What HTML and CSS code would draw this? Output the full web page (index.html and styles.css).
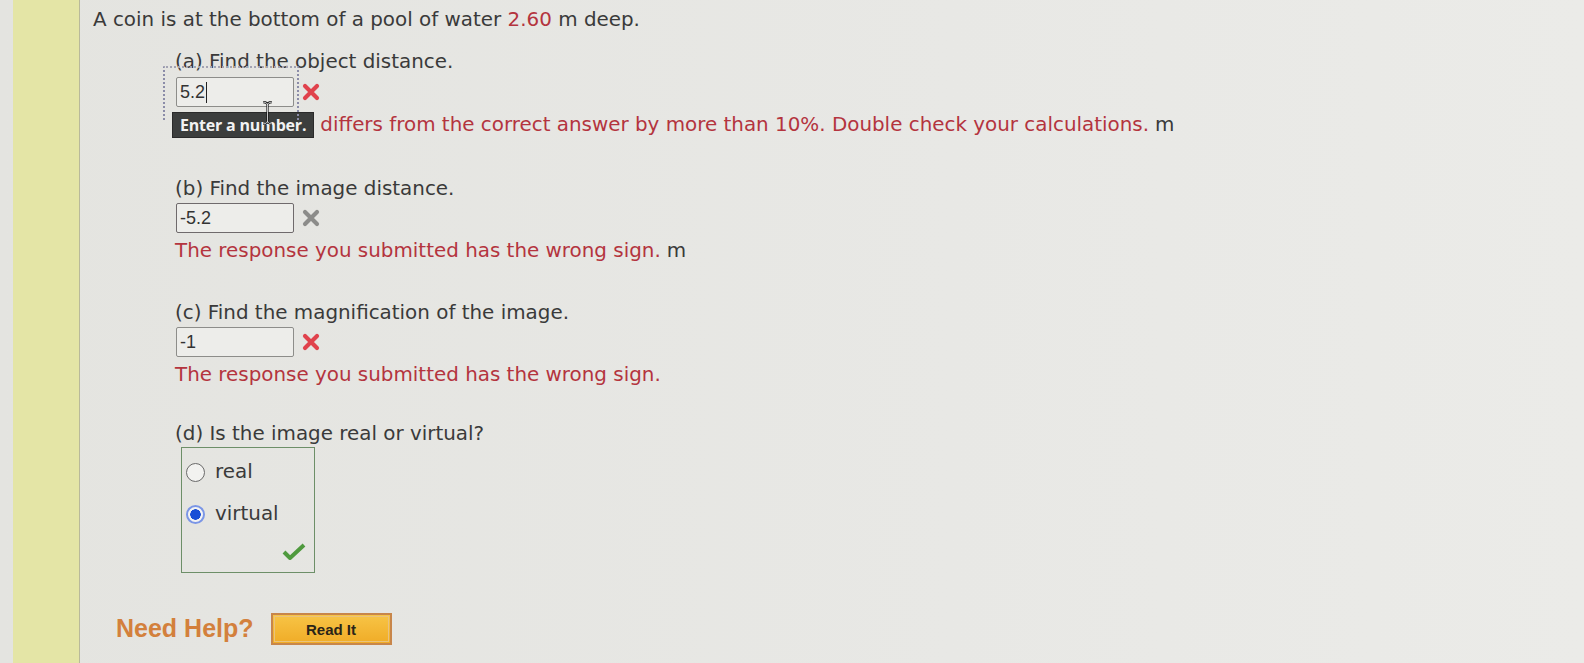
FILE: index.html
```html
<!DOCTYPE html>
<html lang="en">
<head>
<meta charset="utf-8">
<title>Question</title>
<link rel="stylesheet" href="styles.css">
</head>
<body>
<div class="page">
  <aside class="rail"></aside>
  <main class="content">
    <p class="question">A coin is at the bottom of a pool of water <span class="given">2.60</span> m deep.</p>

    <div class="parts">
      <section class="part part-a">
        <div class="label">(a) Find the object distance.</div>
        <div class="answer-row">
          <span class="field">5.2<span class="caret"></span></span>
          <svg class="mark" viewBox="0 0 20 20" width="20" height="20"><path d="M4 4 L16 16 M16 4 L4 16" class="x-red"/></svg>
        </div>
        <div class="feedback">
          <span class="tip">Enter a number.</span>
          <span class="msg">differs from the correct answer by more than 10%. Double check your calculations.</span>
          <span class="unit">m</span>
        </div>
        <div class="focus-ring"></div>
        <svg class="ibeam" viewBox="0 0 12 24" width="13" height="26"><path d="M2 2 Q6 2 6 5 Q6 2 10 2 M6 5 V19 M2 22 Q6 22 6 19 Q6 22 10 22" fill="none" stroke="#111" stroke-width="2"/><path d="M2 2 Q6 2 6 5 Q6 2 10 2 M6 5 V19 M2 22 Q6 22 6 19 Q6 22 10 22" fill="none" stroke="#fff" stroke-width="0.7"/></svg>
      </section>

      <section class="part">
        <div class="label">(b) Find the image distance.</div>
        <div class="answer-row">
          <span class="field field-dark">-5.2</span>
          <svg class="mark" viewBox="0 0 20 20" width="20" height="20"><path d="M4 4 L16 16 M16 4 L4 16" class="x-gray"/></svg>
        </div>
        <div class="feedback">
          <span class="msg">The response you submitted has the wrong sign.</span>
          <span class="unit">m</span>
        </div>
      </section>

      <section class="part">
        <div class="label">(c) Find the magnification of the image.</div>
        <div class="answer-row">
          <span class="field">-1</span>
          <svg class="mark" viewBox="0 0 20 20" width="20" height="20"><path d="M4 4 L16 16 M16 4 L4 16" class="x-red"/></svg>
        </div>
        <div class="feedback">
          <span class="msg">The response you submitted has the wrong sign.</span>
        </div>
      </section>

      <section class="part part-d">
        <div class="label">(d) Is the image real or virtual?</div>
        <div class="choices">
          <label class="choice"><span class="radio"></span><span>real</span></label>
          <label class="choice"><span class="radio radio-on"></span><span>virtual</span></label>
          <svg class="check" viewBox="0 0 24 18" width="24" height="18"><path d="M2 10 L8 16 L22 3" fill="none" stroke="#4f9a3e" stroke-width="4" stroke-linejoin="round"/></svg>
        </div>
      </section>
    </div>

    <div class="help">
      <span class="help-text">Need Help?</span>
      <button class="read-it">Read It</button>
    </div>
  </main>
</div>
</body>
</html>
```

FILE: styles.css
```css
html, body {
  margin: 0;
  padding: 0;
  height: 100%;
}
body {
  background: linear-gradient(90deg, #e4e4e0, #e8e8e5 60%, #ebebe8);
  color: #3a3a3a;
  font-family: "DejaVu Sans", Verdana, sans-serif;
  font-size: 19.9px;
  overflow: hidden;
}
.page {
  display: flex;
  height: 663px;
}
.rail {
  width: 66px;
  margin-left: 13px;
  background: #e4e5a6;
  border-right: 1px solid #b9b99a;
  flex: none;
}
.content {
  padding-left: 13px;
  padding-top: 9px;
  flex: 1;
}
.question {
  margin: 0;
  line-height: 22px;
}
.given {
  color: #b4343e;
}
.parts {
  margin-left: 82px;
  margin-top: 20px;
  display: flex;
  flex-direction: column;
  gap: 40px;
}
.part {
  position: relative;
}
.part-d {
  margin-top: -3px;
}
.label {
  line-height: 22px;
}
.answer-row {
  display: flex;
  align-items: center;
  margin-top: 3px;
  margin-left: 1px;
}
.part-a .answer-row {
  margin-top: 4px;
}
.field {
  box-sizing: border-box;
  width: 118px;
  height: 30px;
  border: 1px solid #8d8d8a;
  border-radius: 2px;
  background: #ededea;
  font-family: "Liberation Sans", Arial, sans-serif;
  font-size: 18px;
  color: #333;
  padding: 4px 0 0 3px;
  display: flex;
  align-items: flex-start;
}
.field-dark {
  border-color: #6f6a6c;
}
.caret {
  display: inline-block;
  width: 1px;
  height: 21px;
  background: #222;
  margin-left: 1px;
}
.mark {
  margin-left: 7px;
}
.x-red {
  stroke: #e0424c;
  stroke-width: 4.2;
  stroke-linecap: round;
  fill: none;
}
.x-gray {
  stroke: #8c8c8a;
  stroke-width: 4.2;
  stroke-linecap: round;
  fill: none;
}
.feedback {
  margin-top: 7px;
  line-height: 22px;
  display: flex;
  align-items: center;
  gap: 6px;
}
.msg {
  color: #b4343e;
}
.unit {
  color: #3a3a3a;
}
.tip {
  background: #3c3e3d;
  color: #f2f2f2;
  font-family: "Open Sans", "DejaVu Sans", sans-serif;
  font-weight: 700;
  font-size: 16px;
  letter-spacing: -0.2px;
  height: 24px;
  line-height: 24px;
  padding: 0 7px;
  margin-left: -3px;
  margin-right: 0;
  border: 1px solid #2a2a2a;
}
.part-a .feedback {
  margin-top: 5px;
}
.focus-ring {
  position: absolute;
  left: -12px;
  top: 15px;
  width: 132px;
  height: 52px;
  border-left: 2px dotted #8b8ca8;
  border-right: 2px dotted #8b8ca8;
  border-top: 2px dotted #a3a3b3;
  pointer-events: none;
}
.ibeam {
  position: absolute;
  left: 86px;
  top: 49px;
}
.choices {
  box-sizing: border-box;
  margin-top: 2px;
  margin-left: 6px;
  width: 134px;
  height: 126px;
  border: 1px solid #6d8f68;
  padding: 13px 0 0 4px;
  position: relative;
}
.choice {
  display: flex;
  align-items: center;
  gap: 10px;
  line-height: 22px;
  height: 22px;
  margin-bottom: 20px;
}
.radio {
  box-sizing: border-box;
  width: 19px;
  height: 19px;
  border: 1.5px solid #6a6a6a;
  border-radius: 50%;
  background: #f2f2f0;
  flex: none;
}
.radio-on {
  border: 2.5px solid #7b96e6;
  background: radial-gradient(circle, #1a4fd6 0 5px, #f4f4f4 5.5px);
}
.check {
  position: absolute;
  right: 8px;
  bottom: 12px;
}
.help {
  margin-top: 38px;
  margin-left: 23px;
  display: flex;
  align-items: center;
  gap: 17px;
}
.help-text {
  font-family: "Liberation Sans", Arial, sans-serif;
  font-weight: 700;
  font-size: 25px;
  color: #d3803c;
}
.read-it {
  box-sizing: border-box;
  width: 121px;
  height: 32px;
  margin-top: 2px;
  border: 2px solid #c8864a;
  outline: 1px solid #e9c27e;
  outline-offset: -4px;
  background: linear-gradient(#f7c446, #f0ac27);
  font-family: "Liberation Sans", Arial, sans-serif;
  font-weight: 700;
  font-size: 15px;
  color: #2a2418;
  padding: 0;
  cursor: pointer;
}
```
